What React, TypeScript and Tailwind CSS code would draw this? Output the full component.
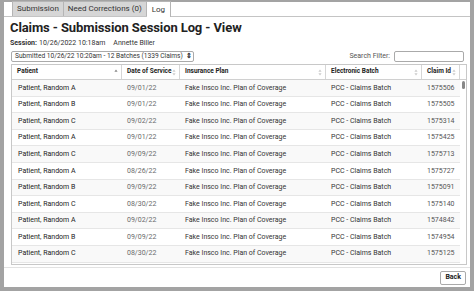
import React from "react";

const rows: [string, string, string][] = [
  ["Patient, Random A", "09/01/22", "1575506"],
  ["Patient, Random B", "09/01/22", "1575505"],
  ["Patient, Random C", "09/02/22", "1575314"],
  ["Patient, Random A", "09/01/22", "1575425"],
  ["Patient, Random C", "09/09/22", "1575713"],
  ["Patient, Random A", "08/26/22", "1575727"],
  ["Patient, Random B", "09/09/22", "1575091"],
  ["Patient, Random C", "08/30/22", "1575140"],
  ["Patient, Random A", "09/02/22", "1574842"],
  ["Patient, Random B", "09/09/22", "1574954"],
  ["Patient, Random C", "08/30/22", "1575125"],
];

function SortIcon({ active }: { active?: boolean }) {
  return (
    <svg width="4" height="7" viewBox="0 0 4 7" className="shrink-0">
      <path d="M2 0.5 L3.6 2.8 H0.4 Z" fill={active ? "#888" : "#ccc"} />
      {!active && <path d="M2 6.5 L3.6 4.2 H0.4 Z" fill="#ccc" />}
    </svg>
  );
}

function Th({ label, w, active }: { label: string; w: string; active?: boolean }) {
  return (
    <div className={`${w} flex items-center justify-between pl-[5px] pr-[3px] border-r border-[#d6d6d6] whitespace-nowrap`}>
      <span>{label}</span>
      <SortIcon active={active} />
    </div>
  );
}

export default function App() {
  return (
    <div
      className="w-[474px] h-[291px] bg-[#a3a3a3] pt-[2px] pl-[4px] pr-[4px] pb-[4px] text-[#222]"
      style={{ fontFamily: "Roboto, 'Liberation Sans', sans-serif" }}
    >
      <div className="bg-white h-full flex flex-col">
        {/* tabs */}
        <div className="h-[15px] flex items-end pl-[8px] border-b border-[#c4c4c4] shrink-0">
          <div className="h-[15px] px-[4px] flex items-center bg-[#d6d6d6] border border-b-0 border-[#b5b5b5] text-[8px] text-[#333] whitespace-nowrap">
            Submission
          </div>
          <div className="h-[15px] px-[4px] flex items-center bg-[#d6d6d6] border border-l-0 border-b-0 border-[#b5b5b5] text-[8px] text-[#333] whitespace-nowrap">
            Need Corrections (0)
          </div>
          <div className="h-[16px] -mb-px px-[5px] flex items-center bg-white border border-l-0 border-b-0 border-[#b5b5b5] text-[8px] text-[#333]">
            Log
          </div>
        </div>

        <div className="flex-1 flex flex-col px-[6px] min-h-0">
          <div className="mt-[3px] h-[16px] flex items-center text-[13px] font-bold tracking-[-0.1px] text-[#222] whitespace-nowrap">
            Claims - Submission Session Log - View
          </div>
          <div className="mt-[3px] h-[9px] flex items-center text-[7px] text-[#333] whitespace-nowrap">
            <span className="font-bold">Session:</span>
            <span className="ml-[2px]">10/26/2022 10:18am</span>
            <span className="ml-[8px]">Annette Biller</span>
          </div>
          <div className="mt-[3px] h-[11px] flex items-center justify-between">
            <div className="ml-[1px] w-[183px] h-[11px] border border-[#aaa] rounded-[2px] flex items-center justify-between gap-[3px] pl-[3px] pr-[4px] text-[6.6px] text-[#333] whitespace-nowrap overflow-hidden">
              <span>Submitted 10/26/22 10:20am - 12 Batches (1339 Claims)</span>
              <span className="text-[7px] leading-none font-bold">⇕</span>
            </div>
            <div className="flex items-center">
              <span className="text-[7px] text-[#555] mr-[4px] whitespace-nowrap">Search Filter:</span>
              <div className="w-[70px] h-[11px] border border-[#aaa] rounded-[2px] bg-white" />
            </div>
          </div>

          {/* table */}
          <div className="mt-[2px] ml-[1px] w-[456px] h-[201px] border border-[#c8c8c8] flex flex-col overflow-hidden">
            <div className="h-[15px] flex shrink-0 border-b border-[#d0d0d0] text-[6.5px] font-bold text-[#222]">
              <Th label="Patient" w="w-[110px]" active />
              <Th label="Date of Service" w="w-[58px]" />
              <Th label="Insurance Plan" w="w-[146px]" />
              <Th label="Electronic Batch" w="w-[96px]" />
              <Th label="Claim Id" w="w-[38px]" />
              <div className="flex-1" />
            </div>
            <div className="flex flex-1 min-h-0">
              <div className="flex-1 flex flex-col">
                {rows.map((r, i) => (
                  <div
                    key={i}
                    className={`h-[16.6px] shrink-0 flex items-center border-b border-[#e6e6e6] text-[7px] whitespace-nowrap ${
                      i % 2 === 0 ? "bg-[#f9f9f9]" : "bg-white"
                    }`}
                  >
                    <div className="w-[110px] pl-[6px] text-[#222]">{r[0]}</div>
                    <div className="w-[58px] pl-[5px] text-[#6a6a6a]">{r[1]}</div>
                    <div className="w-[146px] pl-[5px] text-[#333]">Fake Insco Inc. Plan of Coverage</div>
                    <div className="w-[96px] pl-[5px] text-[#333]">PCC - Claims Batch</div>
                    <div className="w-[38px] pl-[5px] text-[#555]">{r[2]}</div>
                  </div>
                ))}
              </div>
              <div className="w-[7px] flex justify-center pt-[1px]">
                <div className="w-[3px] h-[8px] rounded-full bg-[#888]" />
              </div>
            </div>
          </div>
          <div className="flex-1" />
        </div>

        {/* footer */}
        <div className="h-[20px] shrink-0 border-t border-[#e2e2e2] flex items-center justify-end pr-[4px]">
          <div className="h-[14px] px-[4px] flex items-center border border-[#aaa] rounded-[2px] bg-white text-[7px] font-bold text-[#222]">
            Back
          </div>
        </div>
      </div>
    </div>
  );
}
